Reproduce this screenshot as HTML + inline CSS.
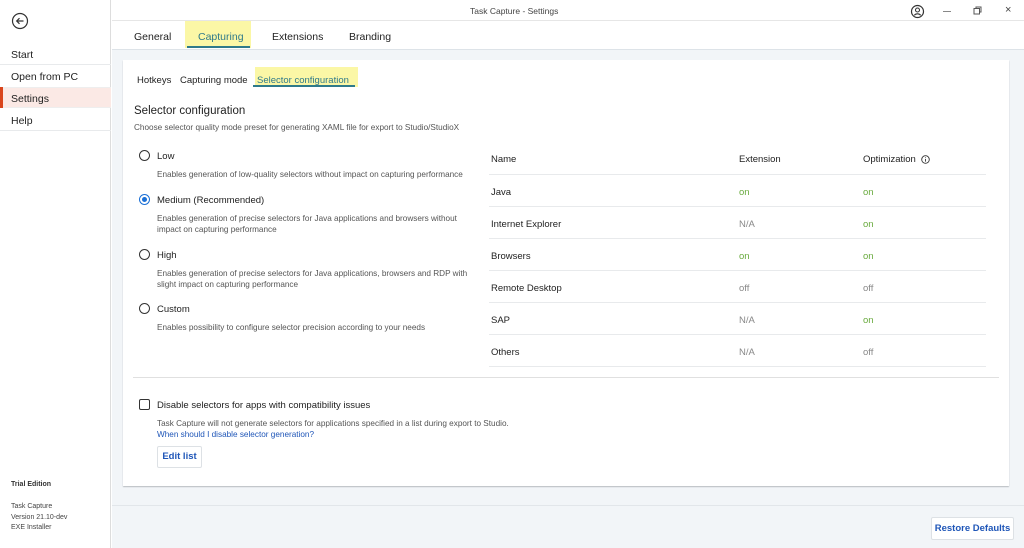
<!DOCTYPE html>
<html><head><meta charset="utf-8"><style>
*{margin:0;padding:0;box-sizing:border-box}
body{width:1024px;height:548px;overflow:hidden;position:relative;font-family:"Liberation Sans",sans-serif;background:#fff;color:#222}
.a{position:absolute;white-space:nowrap}
.s{font-size:10.5px;color:#222}
.d{font-size:8.2px;color:#555}
.t{font-size:9.5px}
.g{color:#6aab3f}.x{color:#888}
.ln{position:absolute;height:1px;background:#e8eaec}
.rad{position:absolute;width:11px;height:11px;border:1.3px solid #333;border-radius:50%}
</style></head><body>
<div class="a" style="left:0;top:0;width:111px;height:548px;border-right:1px solid #ddd;background:#fff"></div>
<svg class="a" style="left:11px;top:12px" width="18" height="18" viewBox="0 0 18 18"><circle cx="9" cy="9" r="7.5" fill="none" stroke="#333" stroke-width="1.2"/><path d="M12.5 9H5.8M8.5 6.2L5.7 9l2.8 2.8" fill="none" stroke="#333" stroke-width="1.2"/></svg>
<div class="a s" style="left:11px;top:49px">Start</div>
<div class="ln" style="left:0;top:64px;width:111px"></div>
<div class="a s" style="left:11px;top:71px">Open from PC</div>
<div class="a" style="left:0;top:87px;width:111px;height:21px;background:#fbe9e5;border-top:1px solid #eee;border-bottom:1px solid #eee"></div>
<div class="a" style="left:0;top:87px;width:3px;height:21px;background:#d9451c"></div>
<div class="a s" style="left:11px;top:93px">Settings</div>
<div class="a s" style="left:11px;top:115px">Help</div>
<div class="ln" style="left:0;top:130px;width:111px"></div>
<div class="a" style="left:11px;top:481px;font-size:7px;font-weight:bold;color:#333">Trial Edition</div>
<div class="a" style="left:11px;top:502px;font-size:7px;color:#444;line-height:10.5px">Task Capture<br>Version 21.10-dev<br>EXE Installer</div>
<div class="a" style="left:470px;top:6px;font-size:8.5px;color:#444">Task Capture - Settings</div>
<svg class="a" style="left:910px;top:4px" width="15" height="15" viewBox="0 0 15 15"><circle cx="7.5" cy="7.5" r="6" fill="none" stroke="#333" stroke-width="1.2"/><circle cx="7.5" cy="6" r="2" fill="none" stroke="#333" stroke-width="1.1"/><path d="M4.3 11.3c1.5-2 4.9-2 6.4 0" fill="none" stroke="#333" stroke-width="1.1"/></svg>
<div class="a" style="left:943px;top:11px;width:8px;height:1px;background:#888"></div>
<svg class="a" style="left:973px;top:6px" width="9" height="9" viewBox="0 0 9 9"><rect x="1" y="2.5" width="5.5" height="5.5" fill="none" stroke="#555"/><path d="M3 2.5V1h5v5H6.5" fill="none" stroke="#555"/></svg>
<div class="a" style="left:1005px;top:4px;font-size:11px;color:#444">×</div>
<div class="ln" style="left:112px;top:20px;width:912px;background:#e6e6e6"></div>
<div class="a" style="left:185px;top:21px;width:66px;height:27px;background:#fbf7a6"></div>
<div class="a" style="left:187px;top:46px;width:63px;height:2px;background:#2f7a8a"></div>
<div class="a s" style="left:134px;top:31px">General</div>
<div class="a s" style="left:198px;top:31px;color:#2f7a8a">Capturing</div>
<div class="a s" style="left:272px;top:31px">Extensions</div>
<div class="a s" style="left:349px;top:31px">Branding</div>
<div class="a" style="left:112px;top:49px;width:912px;height:499px;background:#f2f5f8;border-top:1px solid #dde3e8"></div>
<div class="a" style="left:112px;top:505px;width:912px;height:1px;background:#e2e6ea"></div>
<div class="a" style="left:931px;top:517px;width:83px;height:23px;background:#fff;border:1px solid #dde1e5;border-radius:2px;font-size:9.5px;font-weight:600;color:#1f56b8;text-align:center;line-height:21px">Restore Defaults</div>
<div class="a" style="left:123px;top:60px;width:886px;height:426px;background:#fff;box-shadow:0 1px 1px #b8bcc0"></div>
<div class="a" style="left:255px;top:67px;width:103px;height:20px;background:#fbf7a6"></div>
<div class="a" style="left:253px;top:85px;width:102px;height:2px;background:#2f7a8a"></div>
<div class="a t" style="left:137px;top:75px">Hotkeys</div>
<div class="a t" style="left:180px;top:75px">Capturing mode</div>
<div class="a t" style="left:257px;top:75px;color:#2f7a8a">Selector configuration</div>
<div class="a" style="left:134px;top:105px;font-size:11.5px;color:#222">Selector configuration</div>
<div class="a d" style="left:134px;top:123px">Choose selector quality mode preset for generating XAML file for export to Studio/StudioX</div>
<div class="rad" style="left:139px;top:150px"></div>
<div class="a t" style="left:157px;top:151px">Low</div>
<div class="a d" style="left:157px;top:170px">Enables generation of low-quality selectors without impact on capturing performance</div>
<div class="rad" style="left:139px;top:194px;border-color:#1a6fd6"></div><div class="a" style="left:142px;top:197px;width:5px;height:5px;border-radius:50%;background:#1a6fd6"></div>
<div class="a t" style="left:157px;top:195px">Medium (Recommended)</div>
<div class="a d" style="left:157px;top:213px;line-height:11px">Enables generation of precise selectors for Java applications and browsers without<br>impact on capturing performance</div>
<div class="rad" style="left:139px;top:249px"></div>
<div class="a t" style="left:157px;top:250px">High</div>
<div class="a d" style="left:157px;top:268px;line-height:11px">Enables generation of precise selectors for Java applications, browsers and RDP with<br>slight impact on capturing performance</div>
<div class="rad" style="left:139px;top:303px"></div>
<div class="a t" style="left:157px;top:304px">Custom</div>
<div class="a d" style="left:157px;top:323px">Enables possibility to configure selector precision according to your needs</div>
<div class="a t" style="left:491px;top:154px">Name</div>
<div class="a t" style="left:739px;top:154px">Extension</div>
<div class="a t" style="left:863px;top:154px">Optimization</div>
<svg class="a" style="left:921px;top:155px" width="9" height="9" viewBox="0 0 9 9"><circle cx="4.5" cy="4.5" r="3.8" fill="none" stroke="#333" stroke-width=".9"/><path d="M4.5 4v2.6M4.5 2.4v.7" stroke="#333" stroke-width=".9"/></svg>
<div class="ln" style="left:489px;top:174px;width:497px"></div>
<div class="a t" style="left:491px;top:187px">Java</div><div class="a t g" style="left:739px;top:187px">on</div><div class="a t g" style="left:863px;top:187px">on</div>
<div class="ln" style="left:489px;top:206px;width:497px"></div>
<div class="a t" style="left:491px;top:219px">Internet Explorer</div><div class="a t x" style="left:739px;top:219px">N/A</div><div class="a t g" style="left:863px;top:219px">on</div>
<div class="ln" style="left:489px;top:238px;width:497px"></div>
<div class="a t" style="left:491px;top:251px">Browsers</div><div class="a t g" style="left:739px;top:251px">on</div><div class="a t g" style="left:863px;top:251px">on</div>
<div class="ln" style="left:489px;top:270px;width:497px"></div>
<div class="a t" style="left:491px;top:283px">Remote Desktop</div><div class="a t x" style="left:739px;top:283px">off</div><div class="a t x" style="left:863px;top:283px">off</div>
<div class="ln" style="left:489px;top:302px;width:497px"></div>
<div class="a t" style="left:491px;top:315px">SAP</div><div class="a t x" style="left:739px;top:315px">N/A</div><div class="a t g" style="left:863px;top:315px">on</div>
<div class="ln" style="left:489px;top:334px;width:497px"></div>
<div class="a t" style="left:491px;top:347px">Others</div><div class="a t x" style="left:739px;top:347px">N/A</div><div class="a t x" style="left:863px;top:347px">off</div>
<div class="ln" style="left:489px;top:366px;width:497px"></div>
<div class="ln" style="left:133px;top:377px;width:866px;background:#e0e0e0"></div>
<div class="a" style="left:139px;top:399px;width:11px;height:11px;border:1.3px solid #333;border-radius:2px"></div>
<div class="a t" style="left:157px;top:400px">Disable selectors for apps with compatibility issues</div>
<div class="a d" style="left:157px;top:419px">Task Capture will not generate selectors for applications specified in a list during export to Studio.</div>
<div class="a d" style="left:157px;top:430px;color:#1f56b8">When should I disable selector generation?</div>
<div class="a" style="left:157px;top:446px;width:45px;height:22px;border:1px solid #dde1e5;border-radius:2px;font-size:9.5px;font-weight:600;color:#1f56b8;text-align:center;line-height:20px">Edit list</div>
</body></html>
